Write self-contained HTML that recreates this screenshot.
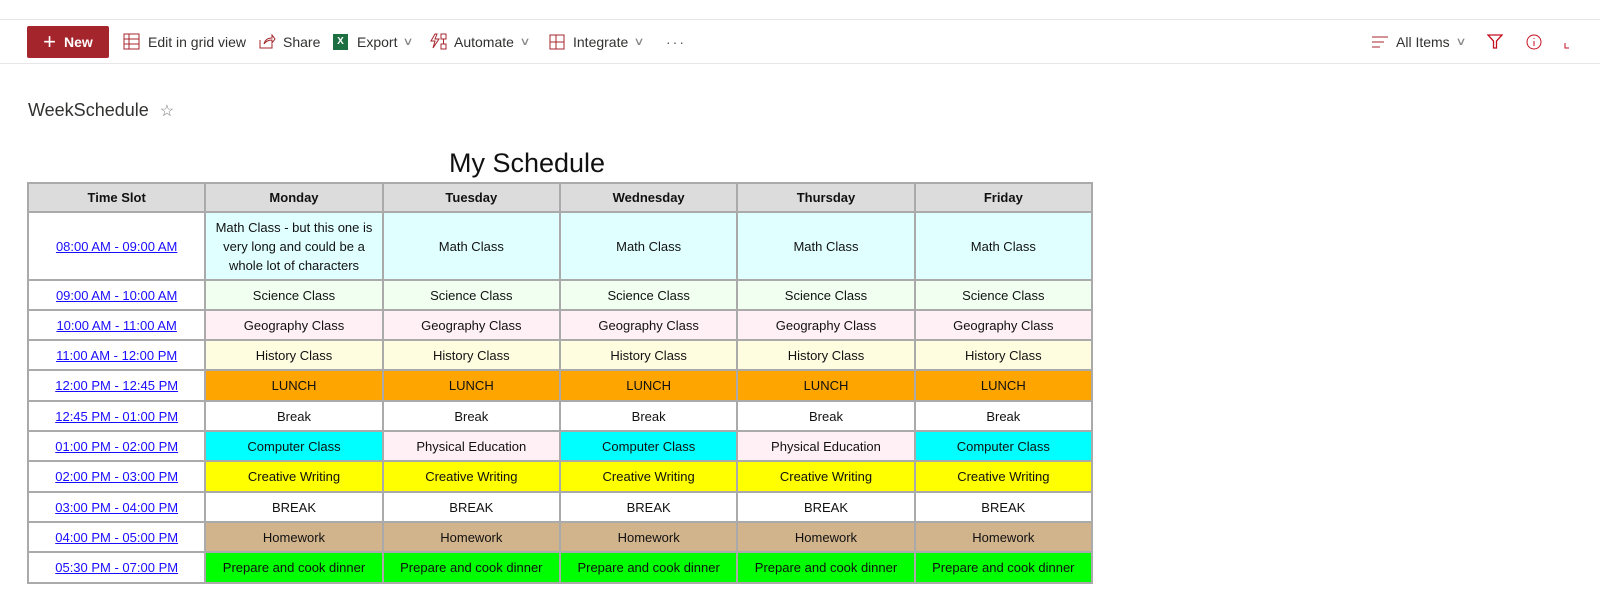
<!DOCTYPE html>
<html><head><meta charset="utf-8"><style>
body{margin:0;width:1600px;height:600px;overflow:hidden;background:#fff;font-family:"Segoe UI","Liberation Sans",sans-serif;color:#323130;position:relative}
.top{position:absolute;left:0;right:0;top:19px;height:43px;border-top:1px solid #e6e6e6;border-bottom:1px solid #e6e6e6}
.cmd{position:absolute;top:0;height:43px;display:flex;align-items:center;font-size:14px;color:#323130}
.new{position:absolute;left:27px;top:6px;width:82px;height:32px;background:#a4262c;border-radius:2px;color:#fff;font-weight:bold;font-size:14px;display:flex;align-items:center;justify-content:center}
.chev{color:#888;font-size:11px;margin-left:7px;transform:scaleX(1.4)}
h2{position:absolute;left:28px;top:100px;margin:0;font-size:18px;font-weight:normal;color:#323130}
.title{position:absolute;left:27px;width:1000px;top:148px;text-align:center;font-size:27px;color:#111;}
table{position:absolute;left:27px;top:182px;border-collapse:collapse;table-layout:fixed;width:1066px;font-size:13px;color:#111}
td,th{border:2px solid #aaa;text-align:center;padding:0 4px;line-height:19px}
th{background:#dcdcdc;font-size:13px;height:27px}
td a{color:#1a0dff;text-decoration:underline}
.m{background:#e0ffff}.s{background:#f0fff0}.g{background:#fff0f5}.h{background:#fffde0}.l{background:#ffa500}.c{background:#00ffff}.y{background:#ffff00}.hw{background:#d2b48c}.d{background:#00ff00}
</style></head><body>
<div class="top">
<div class="new"><span style="font-size:22px;font-weight:normal;margin-right:8px;line-height:1">+</span>New</div>
<div class="cmd" style="left:123px"><svg width="17" height="17" viewBox="0 0 17 17" fill="none" stroke="#a4262c"><rect x="1" y="1" width="15" height="15"/><path d="M1 6H16M1 11H16M6 1V16"/></svg><span style="margin-left:8px">Edit in grid view</span></div>
<div class="cmd" style="left:259px"><svg width="17" height="15" viewBox="0 0 17 15" fill="none" stroke="#a4262c"><path d="M1 6V14H13V10M5 10C6 6 9 4 13 4V1L16 5L13 9V6C10 6 7 7 5 10Z"/></svg><span style="margin-left:7px">Share</span></div>
<div class="cmd" style="left:333px"><span style="display:inline-block;width:15px;height:16px;background:#1d6f42;color:#fff;font-size:10px;font-weight:bold;text-align:center;line-height:16px">X</span><span style="margin-left:9px">Export</span><span class="chev">∨</span></div>
<div class="cmd" style="left:430px"><svg width="17" height="17" viewBox="0 0 17 17" fill="none" stroke="#a4262c"><path d="M5 1L1 8H5L3 15L9 6H5L7 1Z"/><rect x="11" y="1" width="5" height="5"/><rect x="11" y="11" width="5" height="5"/><path d="M13.5 6V11"/></svg><span style="margin-left:7px">Automate</span><span class="chev">∨</span></div>
<div class="cmd" style="left:549px"><svg width="16" height="16" viewBox="0 0 16 16" fill="none" stroke="#a4262c"><rect x="1" y="1" width="14" height="14"/><path d="M1 8H15M7 1V15" /></svg><span style="margin-left:8px">Integrate</span><span class="chev">∨</span></div>
<div class="cmd" style="left:666px;color:#555;letter-spacing:2px">···</div>
<div class="cmd" style="left:1372px"><svg width="16" height="12" viewBox="0 0 16 12" stroke="#a4262c"><path d="M0 1H16M0 6H12M0 11H8"/></svg><span style="margin-left:8px">All Items</span><span class="chev">∨</span></div>
<div class="cmd" style="left:1487px"><svg width="16" height="15" viewBox="0 0 16 15" fill="none" stroke="#c50f1f" stroke-width="1.3"><path d="M1 1H15L9.5 7V14H6.5V7Z"/></svg></div>
<div class="cmd" style="left:1526px"><svg width="16" height="16" viewBox="0 0 16 16" fill="none" stroke="#c50f1f"><circle cx="8" cy="8" r="7"/><path d="M8 7V12M8 4V5"/></svg></div>
<div class="cmd" style="left:1563px"><svg width="6" height="16" viewBox="0 0 6 16" fill="none" stroke="#c50f1f"><path d="M2 9V14H6"/></svg></div>
</div>
<h2>WeekSchedule <span style="color:#777;font-size:16px;margin-left:6px">☆</span></h2>
<div class="title">My Schedule</div>
<table>
<tr><th>Time Slot</th><th>Monday</th><th>Tuesday</th><th>Wednesday</th><th>Thursday</th><th>Friday</th></tr>
<tr style="height:68px"><td><a>08:00 AM - 09:00 AM</a></td><td class="m">Math Class - but this one is very long and could be a whole lot of characters</td><td class="m">Math Class</td><td class="m">Math Class</td><td class="m">Math Class</td><td class="m">Math Class</td></tr>
<tr style="height:30px"><td><a>09:00 AM - 10:00 AM</a></td><td class="s">Science Class</td><td class="s">Science Class</td><td class="s">Science Class</td><td class="s">Science Class</td><td class="s">Science Class</td></tr>
<tr style="height:30px"><td><a>10:00 AM - 11:00 AM</a></td><td class="g">Geography Class</td><td class="g">Geography Class</td><td class="g">Geography Class</td><td class="g">Geography Class</td><td class="g">Geography Class</td></tr>
<tr style="height:30px"><td><a>11:00 AM - 12:00 PM</a></td><td class="h">History Class</td><td class="h">History Class</td><td class="h">History Class</td><td class="h">History Class</td><td class="h">History Class</td></tr>
<tr style="height:31px"><td><a>12:00 PM - 12:45 PM</a></td><td class="l">LUNCH</td><td class="l">LUNCH</td><td class="l">LUNCH</td><td class="l">LUNCH</td><td class="l">LUNCH</td></tr>
<tr style="height:30px"><td><a>12:45 PM - 01:00 PM</a></td><td>Break</td><td>Break</td><td>Break</td><td>Break</td><td>Break</td></tr>
<tr style="height:30px"><td><a>01:00 PM - 02:00 PM</a></td><td class="c">Computer Class</td><td class="g">Physical Education</td><td class="c">Computer Class</td><td class="g">Physical Education</td><td class="c">Computer Class</td></tr>
<tr style="height:31px"><td><a>02:00 PM - 03:00 PM</a></td><td class="y">Creative Writing</td><td class="y">Creative Writing</td><td class="y">Creative Writing</td><td class="y">Creative Writing</td><td class="y">Creative Writing</td></tr>
<tr style="height:30px"><td><a>03:00 PM - 04:00 PM</a></td><td>BREAK</td><td>BREAK</td><td>BREAK</td><td>BREAK</td><td>BREAK</td></tr>
<tr style="height:30px"><td><a>04:00 PM - 05:00 PM</a></td><td class="hw">Homework</td><td class="hw">Homework</td><td class="hw">Homework</td><td class="hw">Homework</td><td class="hw">Homework</td></tr>
<tr style="height:31px"><td><a>05:30 PM - 07:00 PM</a></td><td class="d">Prepare and cook dinner</td><td class="d">Prepare and cook dinner</td><td class="d">Prepare and cook dinner</td><td class="d">Prepare and cook dinner</td><td class="d">Prepare and cook dinner</td></tr>
</table>
</body></html>
